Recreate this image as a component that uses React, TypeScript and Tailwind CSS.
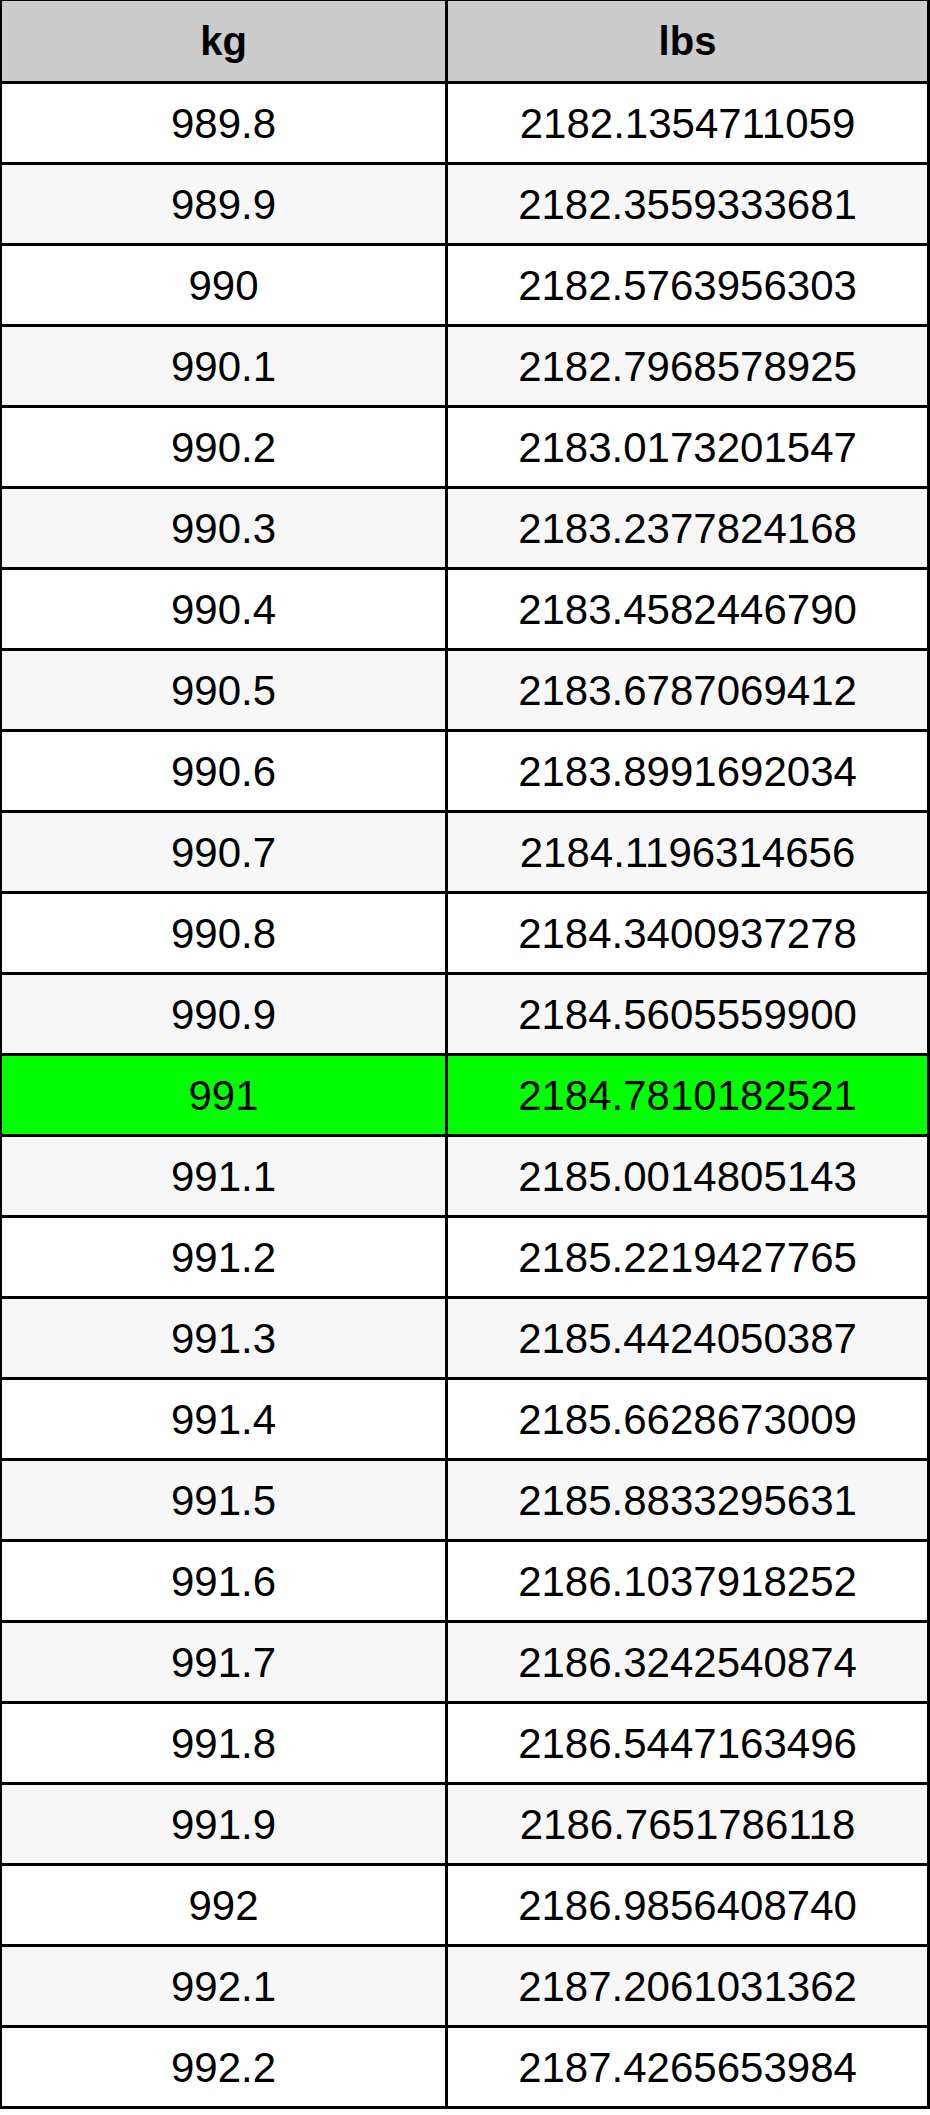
const rows: [string, string][] = [
  ['989.8', '2182.1354711059'],
  ['989.9', '2182.3559333681'],
  ['990', '2182.5763956303'],
  ['990.1', '2182.7968578925'],
  ['990.2', '2183.0173201547'],
  ['990.3', '2183.2377824168'],
  ['990.4', '2183.4582446790'],
  ['990.5', '2183.6787069412'],
  ['990.6', '2183.8991692034'],
  ['990.7', '2184.1196314656'],
  ['990.8', '2184.3400937278'],
  ['990.9', '2184.5605559900'],
  ['991', '2184.7810182521'],
  ['991.1', '2185.0014805143'],
  ['991.2', '2185.2219427765'],
  ['991.3', '2185.4424050387'],
  ['991.4', '2185.6628673009'],
  ['991.5', '2185.8833295631'],
  ['991.6', '2186.1037918252'],
  ['991.7', '2186.3242540874'],
  ['991.8', '2186.5447163496'],
  ['991.9', '2186.7651786118'],
  ['992', '2186.9856408740'],
  ['992.1', '2187.2061031362'],
  ['992.2', '2187.4265653984'],
]

function rowBg(kg: string, index: number) {
  if (kg === '991') return 'bg-[#00ff00]'
  return index % 2 === 0 ? 'bg-white' : 'bg-[#f7f7f7]'
}

export default function App() {
  return (
    <div className="w-[930px] bg-white font-['Liberation_Sans',Arial,sans-serif] text-black">
      <div className="border-t border-l-2 border-r-[3px] border-black">
        <div className="flex h-[83px] border-b-[3px] border-black bg-[#cccccc] text-[40px] font-bold">
          <div className="flex w-[446px] items-center justify-center border-r-[3px] border-black">
            kg
          </div>
          <div className="flex flex-1 items-center justify-center">lbs</div>
        </div>

        {rows.map(([kg, lbs], index) => (
          <div
            key={kg}
            className={`flex h-[81px] border-b-[3px] border-black text-[42px] ${rowBg(kg, index)}`}
          >
            <div className="flex w-[446px] items-center justify-center border-r-[3px] border-black">
              {kg}
            </div>
            <div className="flex flex-1 items-center justify-center">{lbs}</div>
          </div>
        ))}
      </div>
    </div>
  )
}
